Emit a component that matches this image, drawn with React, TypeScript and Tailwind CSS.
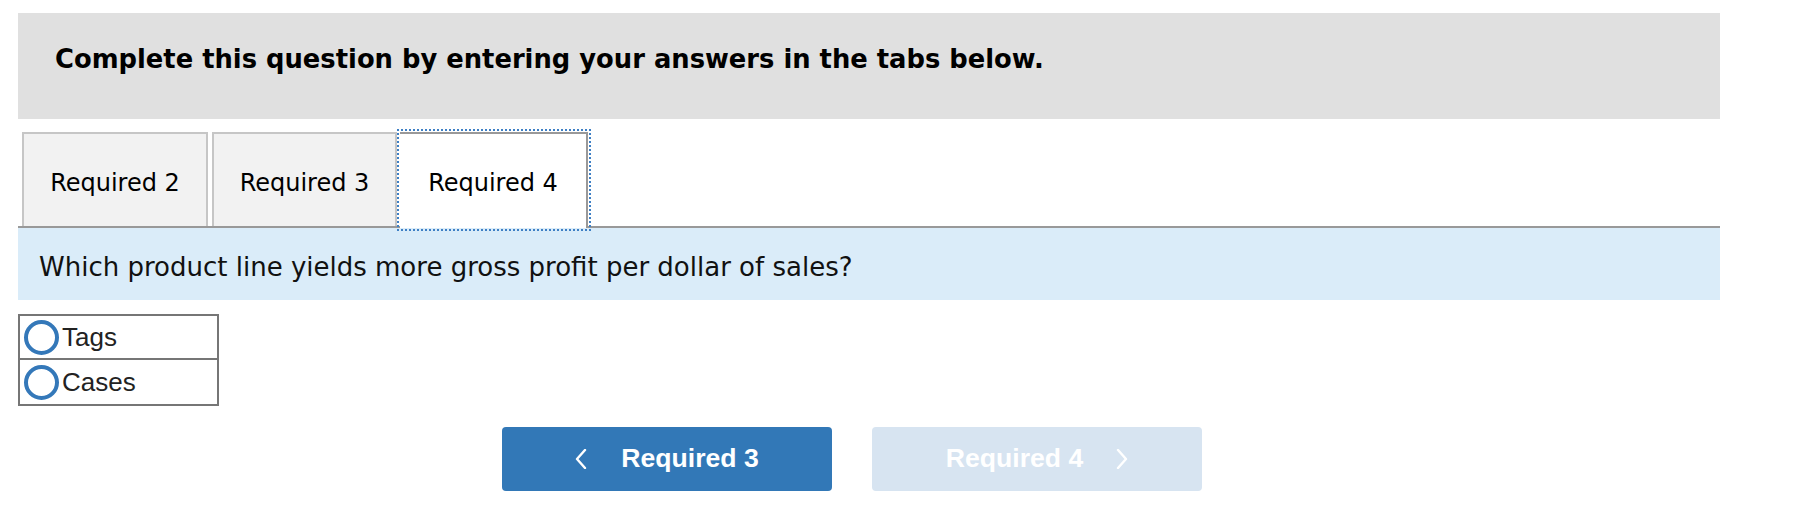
import React from 'react';

const verdana = { fontFamily: '"DejaVu Sans", Verdana, sans-serif' };
const arial = { fontFamily: '"Liberation Sans", Arial, sans-serif' };

function Chevron({ dir }: { dir: 'left' | 'right' }) {
  return (
    <svg width="12" height="20" viewBox="0 0 12 20" fill="none">
      <polyline
        points={dir === 'left' ? '10,1 2,10 10,19' : '2,1 10,10 2,19'}
        stroke="white"
        strokeWidth="2.4"
        strokeLinecap="round"
        strokeLinejoin="round"
      />
    </svg>
  );
}

export default function App() {
  return (
    <div className="min-h-[528px] bg-white pl-[18px] pt-[13px]">
      <div className="w-[1702px]">
        {/* Instructions */}
        <div className="h-[106px] bg-[#e0e0e0] pl-[37px] pt-[34px]">
          <h1 className="text-[25.8px] font-bold leading-none text-black" style={verdana}>
            Complete this question by entering your answers in the tabs below.
          </h1>
        </div>

        {/* Tabs */}
        <div className="mt-[15px] flex h-[94px] items-end border-b-2 border-[#999]" style={verdana}>
          <div className="ml-[4px] flex h-[94px] w-[186px] items-center justify-center border-2 border-b-0 border-[#c6c6c6] bg-[#f2f2f2] pt-[6px] text-[24px] text-black">
            Required 2
          </div>
          <div className="ml-[4px] flex h-[94px] w-[185px] items-center justify-center border-2 border-b-0 border-[#c6c6c6] bg-[#f2f2f2] pt-[6px] text-[24px] text-black">
            Required 3
          </div>
          <div className="relative -mb-[2px] ml-[3px] flex h-[96px] w-[188px] items-center justify-center border-t-2 border-r-2 border-[#999] bg-white pt-[4px] text-[24px] text-black outline-2 outline-offset-[1px] outline-dotted outline-[#3e7fc4]">
            Required 4
          </div>
        </div>

        {/* Question */}
        <div className="h-[72px] bg-[#daecf9] pl-[21px] pt-[26px]">
          <p className="text-[26px] leading-none text-[#111]" style={verdana}>
            Which product line yields more gross profit per dollar of sales?
          </p>
        </div>
      </div>

      {/* Choices */}
      <div className="mt-[14px] w-[201px] border-2 border-[#767676]" style={arial}>
        {['Tags', 'Cases'].map((label, i) => (
          <div
            key={label}
            className={`flex h-[44px] items-center pl-[4px] ${i === 0 ? 'border-b-2 border-[#767676]' : ''}`}
          >
            <span className="h-[35px] w-[35px] shrink-0 rounded-full border-4 border-[#3478b9] bg-white" />
            <span className="ml-[3px] text-[26px] leading-none text-[#222]">{label}</span>
          </div>
        ))}
      </div>

      {/* Navigation */}
      <div className="ml-[484px] mt-[21px] flex gap-[40px]" style={arial}>
        <button className="flex h-[64px] w-[330px] items-center justify-center gap-[34px] rounded-[4px] bg-[#3278b7] text-[26.6px] font-bold text-white">
          <Chevron dir="left" />
          <span>Required 3</span>
        </button>
        <button className="flex h-[64px] w-[330px] items-center justify-center gap-[33px] rounded-[4px] bg-[#d7e4f1] text-[26.6px] font-bold text-white">
          <span>Required 4</span>
          <Chevron dir="right" />
        </button>
      </div>
    </div>
  );
}
